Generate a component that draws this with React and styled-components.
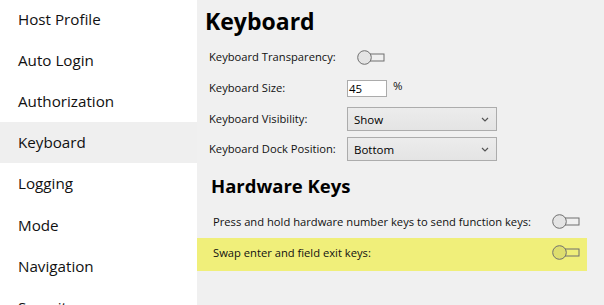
import React from "react";
import styled, { createGlobalStyle } from "styled-components";

const Global = createGlobalStyle`
  html, body { margin: 0; padding: 0; background: #f0f0f0; }
  * { box-sizing: border-box; }
  body { font-family: "Open Sans", "Noto Sans", sans-serif; color: #111; }
`;

const Shell = styled.div`
  display: flex;
  width: 604px;
  height: 305px;
  overflow: hidden;
  background: #f0f0f0;
`;

const Sidebar = styled.nav`
  width: 197px;
  flex: none;
  background: #ffffff;
  display: flex;
  flex-direction: column;
  margin-top: -2px;
`;

const NavItem = styled.div`
  height: 41.2px;
  flex: none;
  display: flex;
  align-items: center;
  padding-left: 18px;
  font-size: 15.2px;
  color: #111;
  background: ${(p) => (p.$active ? "#efefef" : "transparent")};
`;

const Main = styled.main`
  flex: 1;
  display: flex;
  flex-direction: column;
  padding-top: 6px;
`;

const Title = styled.h1`
  margin: 0 0 0 8px;
  font-size: 23px;
  line-height: 30px;
  font-weight: 700;
  color: #000;
`;

const Form = styled.div`
  display: grid;
  grid-template-columns: 138px auto;
  grid-template-rows: 24px 26px 24px 24px;
  row-gap: 6px;
  align-items: center;
  margin: 9px 0 0 12px;
`;

const Label = styled.span`
  font-size: 11.2px;
  color: #111;
  margin-top: -2px;
`;

const ControlCell = styled.div`
  display: flex;
  align-items: center;
  gap: 6px;
  padding-left: ${(p) => p.$indent || 0}px;
`;

const NumberBox = styled.div`
  width: 40px;
  height: 17px;
  background: #fff;
  border: 1px solid #ababab;
  font-size: 11.5px;
  line-height: 15px;
  padding-left: 1px;
  color: #000;
`;

const Unit = styled.span`
  font-size: 11.5px;
  align-self: flex-start;
  margin-top: -2px;
`;

const Select = styled.div`
  width: 150px;
  height: 24px;
  border: 1px solid #acacac;
  background: linear-gradient(#ececec, #e4e4e4);
  display: flex;
  align-items: center;
  justify-content: space-between;
  padding: 0 7px 0 6px;
  font-size: 11.5px;
  color: #000;
`;

const SubTitle = styled.h2`
  margin: 13px 0 0 14px;
  font-size: 18.5px;
  line-height: 24px;
  font-weight: 700;
  color: #000;
`;

const KeyList = styled.div`
  display: flex;
  flex-direction: column;
  margin-top: 7px;
  margin-right: 17px;
`;

const KeyRow = styled.div`
  height: 33px;
  display: flex;
  align-items: center;
  justify-content: space-between;
  padding: 0 7px ${(p) => (p.$highlight ? 5 : 0)}px 16px;
  background: ${(p) => (p.$highlight ? "#f0ef7a" : "transparent")};
  font-size: 11.2px;
  color: #111;
`;

const Toggle = ({ highlight }) => (
  <svg width="28" height="15" viewBox="0 0 28 15">
    <rect
      x="13.5"
      y="4"
      width="13.5"
      height="7"
      fill={highlight ? "#efee7a" : "#f0f0f0"}
      stroke="#6f6f6f"
      strokeWidth="1"
    />
    <circle
      cx="7.5"
      cy="7.5"
      r="6.8"
      fill={highlight ? "#dede6e" : "#e4e4e4"}
      stroke="#6f6f6f"
      strokeWidth="1"
    />
  </svg>
);

const Chevron = () => (
  <svg width="8" height="5" viewBox="0 0 8 5">
    <path d="M1 1 L4 4 L7 1" fill="none" stroke="#555" strokeWidth="1.2" />
  </svg>
);

const navItems = [
  "Host Profile",
  "Auto Login",
  "Authorization",
  "Keyboard",
  "Logging",
  "Mode",
  "Navigation",
  "Security",
];

export default function App() {
  return (
    <>
      <Global />
      <Shell>
        <Sidebar>
          {navItems.map((n) => (
            <NavItem key={n} $active={n === "Keyboard"}>
              {n}
            </NavItem>
          ))}
        </Sidebar>
        <Main>
          <Title>Keyboard</Title>
          <Form>
            <Label>Keyboard Transparency:</Label>
            <ControlCell $indent={10}>
              <Toggle />
            </ControlCell>
            <Label>Keyboard Size:</Label>
            <ControlCell>
              <NumberBox>45</NumberBox>
              <Unit>%</Unit>
            </ControlCell>
            <Label>Keyboard Visibility:</Label>
            <ControlCell>
              <Select>
                <span>Show</span>
                <Chevron />
              </Select>
            </ControlCell>
            <Label>Keyboard Dock Position:</Label>
            <ControlCell>
              <Select>
                <span>Bottom</span>
                <Chevron />
              </Select>
            </ControlCell>
          </Form>
          <SubTitle>Hardware Keys</SubTitle>
          <KeyList>
            <KeyRow>
              <span>Press and hold hardware number keys to send function keys:</span>
              <Toggle />
            </KeyRow>
            <KeyRow $highlight>
              <span>Swap enter and field exit keys:</span>
              <Toggle highlight />
            </KeyRow>
          </KeyList>
        </Main>
      </Shell>
    </>
  );
}
